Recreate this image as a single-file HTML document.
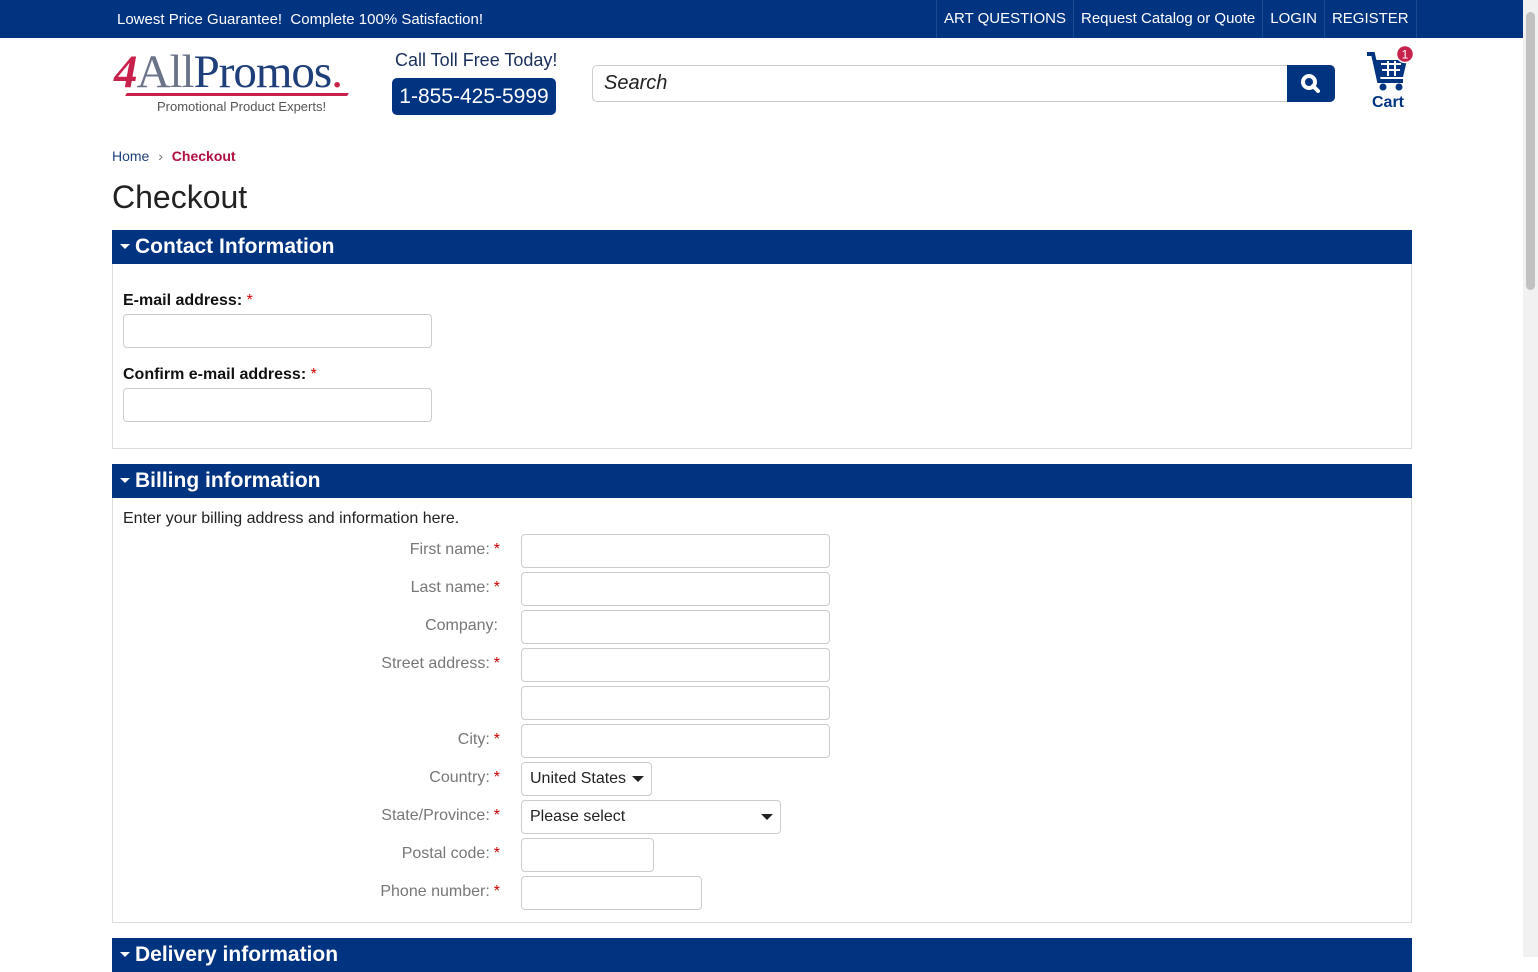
<!DOCTYPE html>
<html><head><meta charset="utf-8"><style>
*{box-sizing:border-box}
body{margin:0;width:1538px;height:957px;overflow:hidden;font-family:"Liberation Sans",Arial,sans-serif;background:#fff;position:relative}
.top{position:absolute;left:0;top:0;width:1523px;height:38px;background:#003380;color:#fff;font-size:15px}
.top .l{position:absolute;left:117px;top:11px}
.nav{position:absolute;left:936px;top:0;height:38px;display:flex;border-left:1px solid #1c4a90}
.nav div{padding:0 7px;line-height:37px;border-right:1px solid #1c4a90;font-size:15px}
.sb{position:absolute;right:0;top:0;width:15px;height:957px;background:#f1f1f1}
.sb i{position:absolute;left:3px;top:12px;width:9px;height:278px;background:#c1c1c1;border-radius:5px}
.abs{position:absolute}
.hdr{position:absolute;left:112px;width:1300px;height:34px;background:#003380;color:#fff;font-weight:bold;font-size:21px;line-height:34px;padding-left:23px}
.hdr:before{content:"";position:absolute;left:8px;top:14px;border:5px solid transparent;border-top:5px solid #fff;border-bottom:0}
.panel{position:absolute;left:112px;width:1300px;border:1px solid #ddd;border-top:0}
.inp{position:absolute;border:1px solid #ccc;border-radius:4px;height:34px;background:#fff}
.lab{position:absolute;right:1050px;color:#777;font-size:16px;text-align:right}
.lab b{color:#c00;font-weight:normal;margin-left:4px}
.req{color:#c00;font-weight:normal}
.sel{position:absolute;border:1px solid #ccc;border-radius:4px;height:34px;font-size:16px;line-height:32px;padding-left:8px;color:#222}
.sel:after{content:"";position:absolute;right:7px;top:13px;border:6px solid transparent;border-top:6px solid #222;border-bottom:0}
</style></head><body>
<div class="top"><span class="l">Lowest Price Guarantee!&nbsp; Complete 100% Satisfaction!</span>
<div class="nav"><div>ART QUESTIONS</div><div>Request Catalog or Quote</div><div>LOGIN</div><div>REGISTER</div></div></div>
<div class="sb"><i></i></div>
<div class="abs" style="left:114px;top:44px;font-family:'Liberation Serif',serif;font-size:47px;letter-spacing:-1px;line-height:56px"><span style="color:#c8214b;font-style:italic;font-weight:bold">4</span><span style="color:#6a7388">All</span><span style="color:#1f3f7a">Promos</span><span style="color:#c8214b">.</span></div>
<div class="abs" style="left:126px;top:93px;width:222px;height:3px;background:#c8214b;transform:skewX(-30deg)"></div>
<div class="abs" style="left:157px;top:99px;font-size:13px;color:#555">Promotional Product Experts!</div>
<div class="abs" style="left:395px;top:50px;font-size:18px;color:#1a2f5a">Call Toll Free Today!</div>
<div class="abs" style="left:392px;top:78px;width:164px;height:37px;background:#003380;border-radius:5px;color:#fff;font-size:21px;text-align:center;line-height:37px">1-855-425-5999</div>
<div class="abs" style="left:592px;top:65px;width:696px;height:37px;border:1px solid #ccc;border-radius:5px 0 0 5px;font-size:20px;font-style:italic;color:#222;padding:6px 11px">Search</div>
<div class="abs" style="left:1287px;top:65px;width:48px;height:37px;background:#003380;border-radius:0 5px 5px 0">
<svg width="48" height="37"><circle cx="22" cy="17" r="6" fill="none" stroke="#fff" stroke-width="4"/><line x1="26" y1="21" x2="31" y2="26" stroke="#fff" stroke-width="4" stroke-linecap="round"/></svg></div>
<svg class="abs" style="left:1364px;top:44px" width="54" height="50"><path d="M3 10h6l6 27h24" fill="none" stroke="#003380" stroke-width="4"/><path d="M11 16h32l-4 17H15z" fill="#003380"/><path d="M17 20h20M18 26h18M24 17v15M31 17v15" stroke="#fff" stroke-width="2"/><circle cx="19" cy="43" r="3.5" fill="#003380"/><circle cx="35" cy="43" r="3.5" fill="#003380"/><circle cx="41" cy="10" r="8.5" fill="#c8214b" stroke="#fff" stroke-width="1.5"/><text x="41" y="14.5" font-size="12" fill="#fff" text-anchor="middle" font-family="Liberation Sans">1</text></svg>
<div class="abs" style="left:1372px;top:94px;font-size:16px;font-weight:bold;color:#003380">Cart</div>
<div class="abs" style="left:112px;top:148px;font-size:14px;color:#1f3f7a">Home <span style="color:#777;margin:0 5px">›</span> <b style="color:#b01040">Checkout</b></div>
<div class="abs" style="left:112px;top:179px;font-size:32px;color:#222">Checkout</div>
<div class="hdr" style="top:230px">Contact Information</div>
<div class="panel" style="top:264px;height:185px"></div>
<div class="abs" style="left:123px;top:292px;font-size:16px;font-weight:bold;color:#111">E-mail address: <span class="req">*</span></div>
<div class="inp" style="left:123px;top:314px;width:309px"></div>
<div class="abs" style="left:123px;top:366px;font-size:16px;font-weight:bold;color:#111">Confirm e-mail address: <span class="req">*</span></div>
<div class="inp" style="left:123px;top:388px;width:309px"></div>
<div class="hdr" style="top:464px">Billing information</div>
<div class="panel" style="top:498px;height:425px"></div>
<div class="abs" style="left:123px;top:510px;font-size:16px;color:#222">Enter your billing address and information here.</div>
<div class="lab" style="top:541px;right:1038px">First name:<b>*</b></div><div class="inp" style="left:521px;top:534px;width:309px"></div>
<div class="lab" style="top:579px;right:1038px">Last name:<b>*</b></div><div class="inp" style="left:521px;top:572px;width:309px"></div>
<div class="lab" style="top:617px;right:1040px">Company:</div><div class="inp" style="left:521px;top:610px;width:309px"></div>
<div class="lab" style="top:655px;right:1038px">Street address:<b>*</b></div><div class="inp" style="left:521px;top:648px;width:309px"></div>
<div class="inp" style="left:521px;top:686px;width:309px"></div>
<div class="lab" style="top:731px;right:1038px">City:<b>*</b></div><div class="inp" style="left:521px;top:724px;width:309px"></div>
<div class="lab" style="top:769px;right:1038px">Country:<b>*</b></div><div class="sel" style="left:521px;top:762px;width:131px">United States</div>
<div class="lab" style="top:807px;right:1038px">State/Province:<b>*</b></div><div class="sel" style="left:521px;top:800px;width:260px">Please select</div>
<div class="lab" style="top:845px;right:1038px">Postal code:<b>*</b></div><div class="inp" style="left:521px;top:838px;width:133px"></div>
<div class="lab" style="top:883px;right:1038px">Phone number:<b>*</b></div><div class="inp" style="left:521px;top:876px;width:181px"></div>
<div class="hdr" style="top:938px">Delivery information</div>
</body></html>
